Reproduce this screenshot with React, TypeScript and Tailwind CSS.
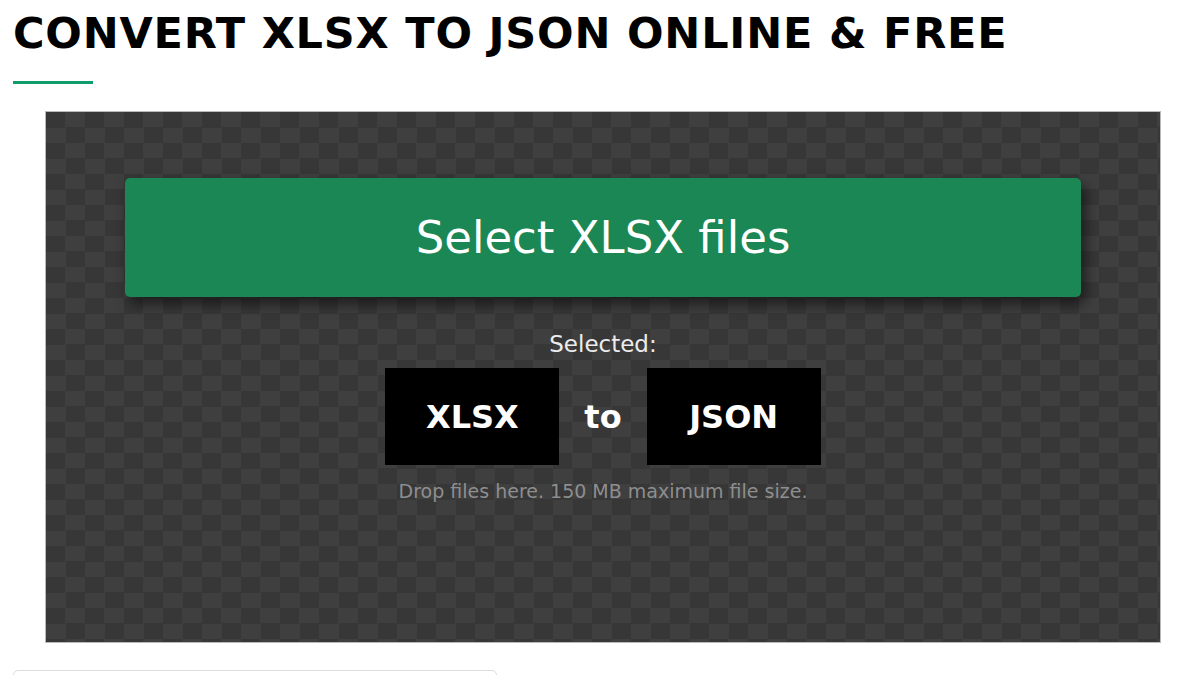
import React from 'react';

const Badge: React.FC<{ label: string }> = ({ label }) => (
  <div className="flex h-[97px] w-[174px] items-center justify-center bg-black text-[32px] font-bold leading-none text-white">
    {label}
  </div>
);

export default function App() {
  return (
    <div className="h-screen overflow-hidden bg-white px-[13px] font-['DejaVu_Sans',sans-serif]">
      <h1 className="pt-[12px] text-[43px] font-bold leading-none tracking-[0.8px] text-black">
        CONVERT XLSX TO JSON ONLINE &amp; FREE
      </h1>
      <div className="mt-[26px] h-[3px] w-[80px] bg-[#109c6b]" />

      <section className="ml-[32px] mt-[27px] flex h-[532px] w-[1116px] flex-col items-center border border-[#b9b9b9] bg-[repeating-conic-gradient(#3f3f3f_0%_25%,#373737_0%_50%)] bg-[length:39px_31px] px-[79px] pt-[66px]">
        <button className="flex h-[119px] w-full items-center justify-center rounded-[5px] bg-[#1a8754] text-[45px] leading-none text-white shadow-[4px_7px_14px_rgba(0,0,0,0.55)]">
          Select XLSX files
        </button>

        <p className="mt-[36px] text-[23px] leading-none text-[#ececec]">Selected:</p>

        <div className="mt-[12px] flex items-center gap-[25px]">
          <Badge label="XLSX" />
          <span className="text-[32px] font-bold leading-none text-white">to</span>
          <Badge label="JSON" />
        </div>

        <p className="mt-[17px] text-[19px] leading-none text-[#8e8e8e]">
          Drop files here. 150 MB maximum file size.
        </p>
      </section>

      <div className="mt-[27px] h-20 w-[484px] rounded-t-[5px] border border-[#dcdcdc]" />
    </div>
  );
}
